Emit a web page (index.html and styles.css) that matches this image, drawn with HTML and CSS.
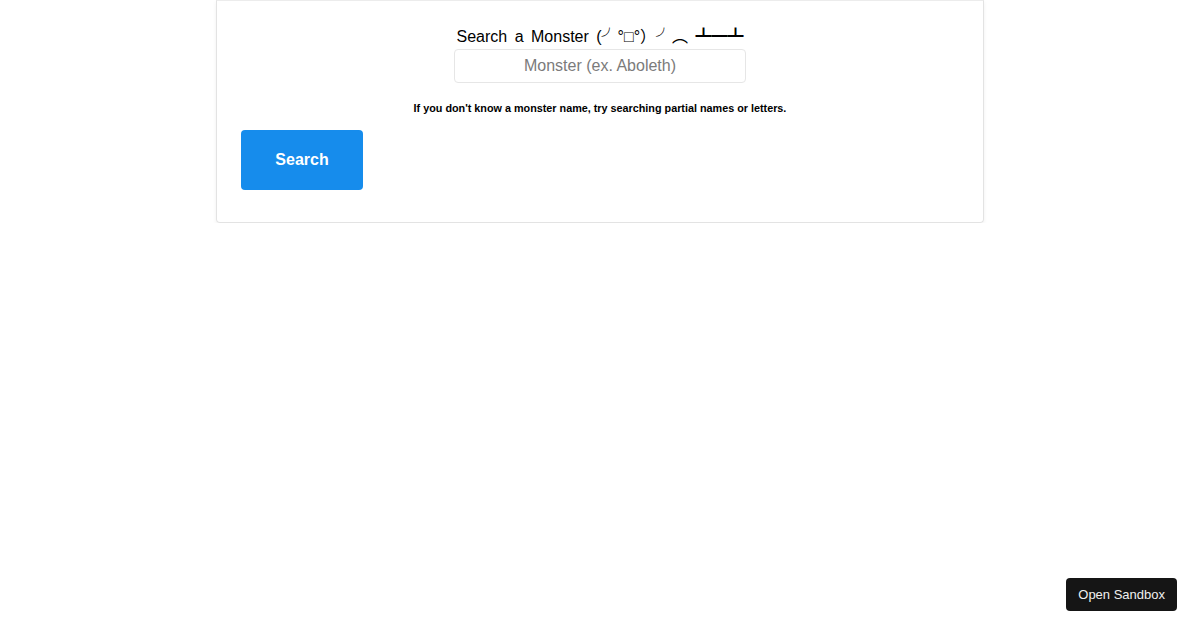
FILE: index.html
```html
<!DOCTYPE html>
<html lang="en">
  <head>
    <meta charset="UTF-8" />
    <meta name="viewport" content="width=device-width, initial-scale=1.0" />
    <title>Monster Search</title>
    <link rel="stylesheet" href="styles.css">
  </head>
  <body>
    <div class="search-card">
      <div class="search-head">
        <label class="search-title" for="monster">Search a Monster (╯°□°）╯︵ ┻━┻</label>
        <input id="monster" class="search-input" type="text" placeholder="Monster (ex. Aboleth)" />
        <p class="hint">If you don't know a monster name, try searching partial names or letters.</p>
      </div>
      <button class="search-btn">Search</button>
    </div>

    <a class="sandbox-btn" href="#">Open Sandbox</a>
  </body>
</html>
```

FILE: styles.css
```css
body {
  font-family: "Liberation Sans", Arial, "Noto Sans CJK JP", sans-serif;
  margin: 0;
  padding: 0;
  background-color: #ffffff;
  color: #000;
}

.search-card {
  width: 768px;
  margin: 0 auto;
  box-sizing: border-box;
  padding: 0 24px 32px 24px;
  border: 1px solid #e3e3e3;
  border-top-color: #ececec;
  border-radius: 0 0 4px 4px;
  box-shadow: 0 2px 4px rgba(0, 0, 0, 0.06);
}

.search-head {
  display: flex;
  flex-direction: column;
  align-items: center;
  padding-top: 26px;
}

.search-title {
  font-size: 16px;
  line-height: 20px;
  word-spacing: 3px;
  margin-bottom: 2px;
}

.search-input {
  width: 292px;
  height: 34px;
  box-sizing: border-box;
  border: 1px solid #e6e6e6;
  border-radius: 4px;
  font-family: inherit;
  font-size: 16px;
  text-align: center;
  outline: none;
}

.search-input::placeholder {
  color: #7b7b7b;
}

.hint {
  font-size: 10.8px;
  font-weight: 700;
  margin: 19px 0 16px 0;
}

.search-btn {
  width: 122px;
  height: 60px;
  background-color: #168cec;
  color: #fff;
  border: none;
  border-radius: 4px;
  font-family: inherit;
  font-size: 16px;
  font-weight: 700;
  cursor: pointer;
}

.sandbox-btn {
  position: fixed;
  right: 23px;
  bottom: 19px;
  background-color: #151515;
  color: #f0f0f0;
  font-size: 13px;
  text-decoration: none;
  padding: 9px 12px;
  border-radius: 4px;
  line-height: 15px;
}
```
